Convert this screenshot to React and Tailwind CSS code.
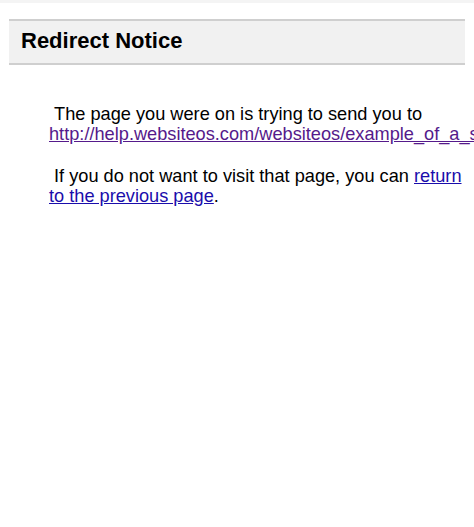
export default function App() {
  return (
    <div className="min-h-[527px] bg-white font-['Liberation_Sans',Arial,sans-serif] text-black overflow-hidden">
      <div className="h-[3px] bg-[#f4f4f4]" />
      <div className="pt-4 px-[9px]">
        <div className="h-[46px] bg-[#f1f1f1] border-t-2 border-b-2 border-[#cfcfcf] flex items-center pl-3 pb-[3px]">
          <h1 className="text-[22px] font-bold leading-none">Redirect Notice</h1>
        </div>
      </div>
      <div className="pl-[49px] pt-[39px] text-[18.2px] leading-[20px] whitespace-nowrap">
        <p>&nbsp;The page you were on is trying to send you to</p>
        <p>
          <a href="#" className="text-[#551a8b] underline">
            http://help.websiteos.com/websiteos/example_of_a_simple_html_page.htm
          </a>
        </p>
        <p className="mt-[22px]">
          &nbsp;If you do not want to visit that page, you can{" "}
          <a href="#" className="text-[#1a0dab] underline">return</a>
        </p>
        <p>
          <a href="#" className="text-[#1a0dab] underline">to the previous page</a>.
        </p>
      </div>
    </div>
  );
}
